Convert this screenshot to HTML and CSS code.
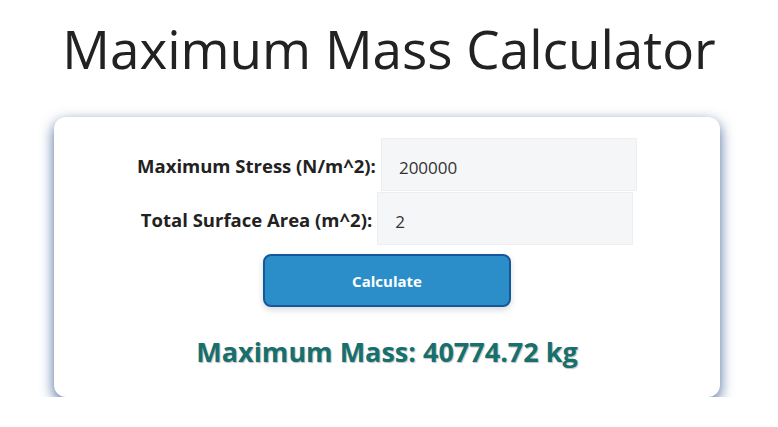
FILE: index.html
```html
<!DOCTYPE html>
<html lang="en">
<head>
    <meta charset="UTF-8">
    <meta name="viewport" content="width=device-width, initial-scale=1.0">
    <title>Maximum Mass Calculator</title>
    <link rel="stylesheet" href="styles.css">
</head>
<body>

<h1 class="pageTitle">Maximum Mass Calculator</h1>

<div class="calcBox">
    <div class="fieldRow">
        <label for="stressInput">Maximum Stress (N/m^2):</label>
        <input type="text" id="stressInput" value="200000">
    </div>
    <div class="fieldRow">
        <label for="areaInput">Total Surface Area (m^2):</label>
        <input type="text" id="areaInput" value="2">
    </div>
    <button id="calcButton">Calculate</button>
    <div class="resultText" id="result">Maximum Mass: 40774.72 kg</div>
</div>

</body>
</html>
```

FILE: styles.css
```css
body {
    font-family: "Open Sans", "Noto Sans", sans-serif;
    background-color: #fff;
    margin: 0;
    padding: 0;
}

.pageTitle {
    font-weight: 400;
    font-size: 53px;
    color: #222;
    text-align: center;
    margin: 14px 0 0 0;
    line-height: 70px;
}

.calcBox {
    width: 666px;
    margin: 33px 0 0 54px;
    padding: 21px 0 27px 0;
    background-color: #fff;
    border-radius: 12px;
    box-shadow: 0 5px 14px rgba(30, 70, 130, 0.8);
    text-align: center;
}

/* label and input side by side, centred in the box */
.fieldRow {
    display: flex;
    justify-content: center;
    align-items: center;
    gap: 5px;
    margin-bottom: 1px;
}

.fieldRow label {
    font-weight: 700;
    font-size: 18.5px;
    color: #222;
    padding-top: 2px;
}

.fieldRow input {
    width: 256px;
    height: 53px;
    box-sizing: border-box;
    padding: 5px 17px 0 17px;
    font-family: inherit;
    font-size: 17px;
    color: #333;
    background-color: #f5f6f8;
    border: 1px solid #eceef1;
}

#calcButton {
    display: block;
    margin: 9px auto 0 auto;
    width: 248px;
    height: 53px;
    font-family: inherit;
    font-size: 15px;
    font-weight: 700;
    color: #fff;
    background-color: #2b8ec9;
    border: 2px solid #14589a;
    border-radius: 8px;
    box-shadow: 0 3px 6px rgba(0, 0, 0, 0.15);
    cursor: pointer;
}

.resultText {
    margin-top: 26px;
    font-size: 27px;
    font-weight: 700;
    color: #17706e;
    text-shadow: 1px 1px 1px rgba(0, 0, 0, 0.25);
}
```
